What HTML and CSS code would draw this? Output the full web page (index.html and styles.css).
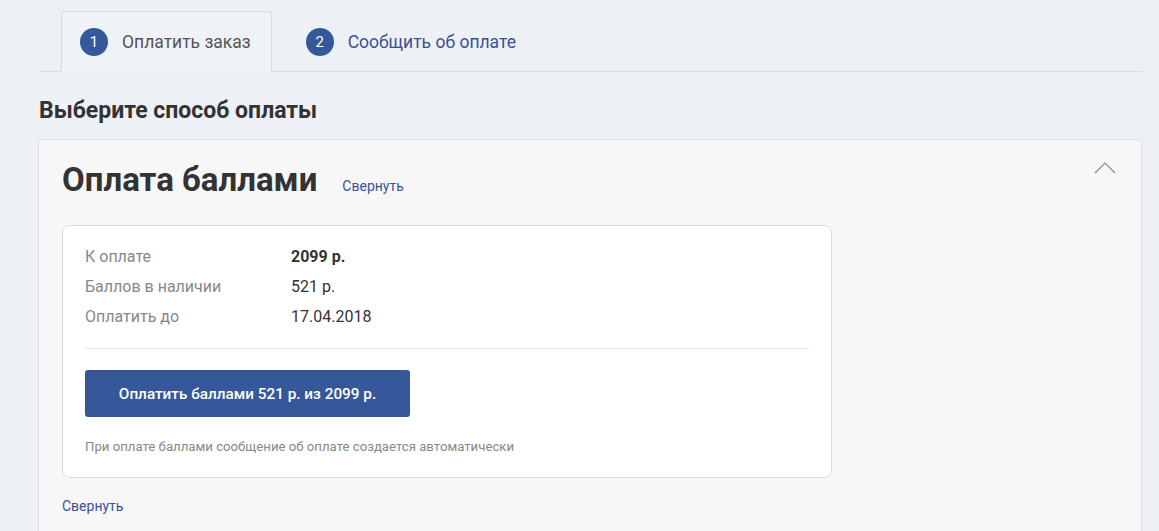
FILE: index.html
```html
<!DOCTYPE html>
<html lang="ru">
<head>
    <meta charset="UTF-8">
    <title>Оплата заказа</title>
    <link rel="stylesheet" href="styles.css">
</head>
<body>
    <div class="page">
        <div class="tabs">
            <div class="tab active"><span class="num">1</span>Оплатить заказ</div>
            <div class="tab"><span class="num">2</span>Сообщить об оплате</div>
        </div>

        <h2 class="section-title">Выберите способ оплаты</h2>

        <div class="panel">
            <div class="panel-head">
                <h1>Оплата баллами</h1>
                <a href="#" class="link small">Свернуть</a>
                <svg class="chevron" width="22" height="14" viewBox="0 0 22 14">
                    <polyline points="1,12 11,2 21,12" fill="none" stroke="#8a8a8a" stroke-width="1.2"/>
                </svg>
            </div>

            <div class="card">
                <div class="row"><span class="label">К оплате</span><b>2099 р.</b></div>
                <div class="row"><span class="label">Баллов в наличии</span><span>521 р.</span></div>
                <div class="row"><span class="label">Оплатить до</span><span>17.04.2018</span></div>
                <div class="divider"></div>
                <button class="pay">Оплатить баллами 521 р. из 2099 р.</button>
                <p class="note">При оплате баллами сообщение об оплате создается автоматически</p>
            </div>

            <a href="#" class="link bottom">Свернуть</a>
        </div>
    </div>
</body>
</html>
```

FILE: styles.css
```css
body {
    margin: 0;
    background-color: #edf0f5;
    font-family: Roboto, "Liberation Sans", sans-serif;
    color: #333;
}

.page {
    padding: 11px 17px 0 38px;
}

.tabs {
    display: flex;
    gap: 15px;
    padding-left: 23px;
    border-bottom: 1px solid #d8dce3;
}

.tab {
    display: flex;
    align-items: center;
    height: 59px;
    padding: 0 20px 0 18px;
    border: 1px solid transparent;
    border-bottom: none;
    margin-bottom: -1px;
    font-size: 17.5px;
    color: #3a5197;
}

.tab.active {
    color: #555;
    background-color: #eff2f6;
    border-color: #d8dce3;
    border-radius: 3px 3px 0 0;
    padding-bottom: 1px;
}

.num {
    display: inline-flex;
    align-items: center;
    justify-content: center;
    width: 28px;
    height: 28px;
    border-radius: 50%;
    background-color: #35589a;
    color: #fff;
    font-size: 15px;
    margin-right: 14px;
}

.section-title {
    font-size: 23px;
    font-weight: 700;
    line-height: 28px;
    margin: 25px 0 14px 1px;
    color: #333;
}

.panel {
    background-color: #f7f7f7;
    border: 1px solid #dcdfe4;
    border-radius: 3px;
    padding: 21px 25px 20px 23px;
    min-height: 400px;
}

.panel-head {
    display: flex;
    align-items: baseline;
}

.panel-head h1 {
    font-size: 33px;
    line-height: 38px;
    font-weight: 700;
    margin: 0 25px 0 0;
    color: #333;
}

.link {
    color: #3a5197;
    text-decoration: none;
}

.link.small {
    font-size: 14px;
}

.chevron {
    margin-left: auto;
    align-self: flex-start;
}

.card {
    width: 724px;
    margin-top: 26px;
    background-color: #fff;
    border: 1px solid #dcdcdc;
    border-radius: 8px;
    padding: 16px 22px 21px 22px;
}

.row {
    display: flex;
    font-size: 16px;
    line-height: 30px;
    color: #333;
}

.row .label {
    width: 206px;
    color: #888;
}

.divider {
    height: 1px;
    background-color: #e8e8e8;
    margin: 16px 0 21px;
}

.pay {
    display: block;
    width: 325px;
    height: 47px;
    border: none;
    border-radius: 3px;
    background-color: #36589a;
    color: #fff;
    font-family: Roboto, "Liberation Sans", sans-serif;
    font-size: 15.3px;
    font-weight: 500;
    cursor: pointer;
}

.note {
    font-size: 13.2px;
    line-height: 18px;
    color: #888;
    margin: 21px 0 0;
}

.bottom {
    display: block;
    font-size: 14px;
    line-height: 20px;
    margin-top: 18px;
}
```
